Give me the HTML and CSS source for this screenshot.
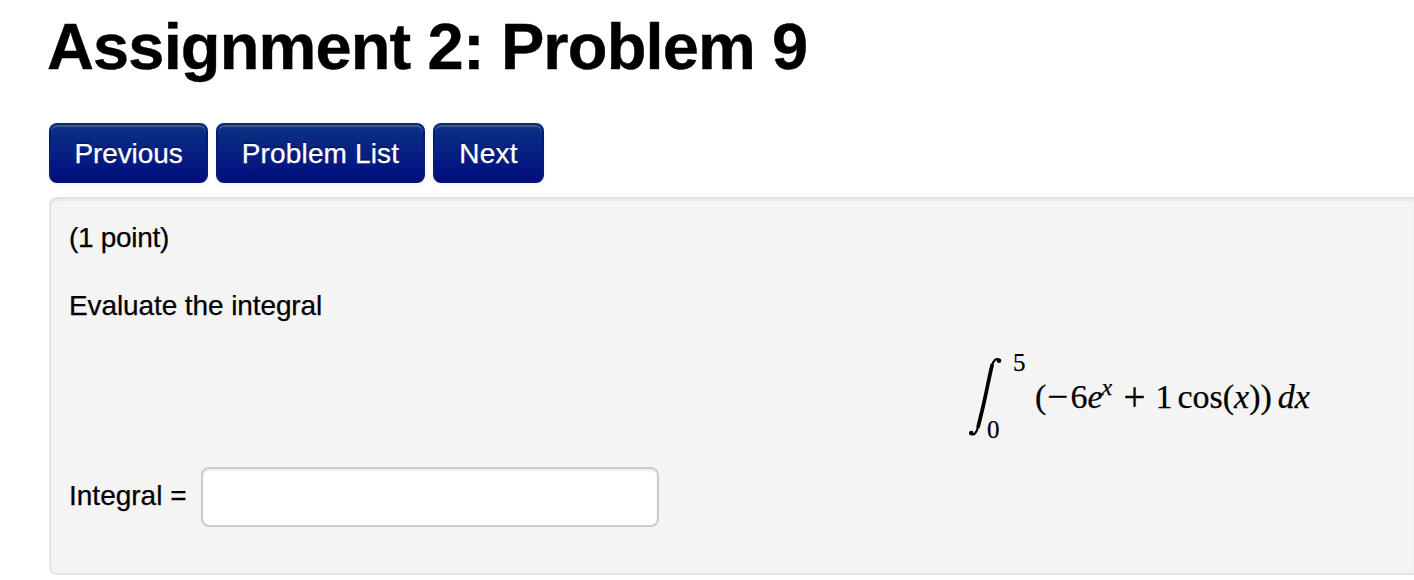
FILE: index.html
```html
<!DOCTYPE html>
<html lang="en">
<head>
<meta charset="utf-8">
<title>Assignment 2: Problem 9</title>
<link rel="stylesheet" href="styles.css">
</head>
<body>
<main class="page">
  <h1 class="title">Assignment 2: Problem 9</h1>
  <nav class="nav">
    <a class="btn btn-prev">Previous</a>
    <a class="btn btn-list">Problem List</a>
    <a class="btn btn-next">Next</a>
  </nav>
  <section class="well">
    <p class="line points">(1 point)</p>
    <p class="line prompt">Evaluate the integral</p>
    <div class="math">
      <svg class="int" width="36" height="88" viewBox="0 0 36 88" role="img" aria-label="integral">
        <g fill="none" stroke="#000" stroke-linecap="round">
          <path stroke-width="2.2" d="M32.500 10C29 7.500 26.500 10 25 16M3.500 84C7.500 85.500 9.500 83 11.200 76.500"/>
          <path stroke-width="3.700" d="M25 15.500C22.500 26 20.800 35 18.200 47S13.600 67 11.200 76.500"/>
        </g>
        <circle cx="32" cy="10.800" r="2.300"/>
        <circle cx="4.300" cy="83" r="2.300"/>
      </svg>
      <span class="limits"><span class="upper">5</span><span class="lower">0</span></span>
      <span class="expr"><span>(</span><span class="minus">−</span><span class="six">6</span><i>e</i><i class="exp">x</i><span class="plus">+</span><span class="one">1</span><span class="cos">cos(</span><i>x</i><span>))</span><i class="dx">dx</i></span>
    </div>
    <label class="answer"><span class="label">Integral =</span><input class="field" type="text"></label>
  </section>
</main>
</body>
</html>
```

FILE: styles.css
```css
* { box-sizing: border-box; }
html { overflow: hidden; }
body {
  margin: 0;
  background: #fff;
  color: #000;
  font: 28px/40px "Liberation Sans", Arial, sans-serif;
  -webkit-text-stroke: 0.25px;
}
.page { padding: 7px 0 0 49px; }
.title {
  margin: 0 0 36px -2px;
  font-size: 65px;
  line-height: 80px;
  font-weight: bold;
  letter-spacing: -0.86px;
  white-space: nowrap;
  -webkit-text-stroke: 0.4px;
}
.nav { display: flex; gap: 8px; }
.btn {
  height: 60px;
  padding-top: 9px;
  border: 2px solid #0a2a72;
  border-color: #0b2b72 #061c78 #05146a;
  border-radius: 8px;
  background: linear-gradient(#0e3383, #000c80) border-box;
  box-shadow: inset 0 2px 0 rgba(255,255,255,.2), 0 2px 4px rgba(0,0,0,.05);
  color: #fff;
  text-align: center;
  text-shadow: 0 -2px 0 rgba(0,0,0,.25);
  white-space: nowrap;
}
.btn-prev { width: 159px; letter-spacing: -0.1px; }
.btn-list { width: 209px; letter-spacing: 0.15px; }
.btn-next { width: 111px; letter-spacing: 0.2px; }
.well {
  height: 378px;
  margin-top: 14px;
  padding: 19px 0 0 18px;
  border: 2px solid #e3e3e3;
  border-right: 0;
  border-radius: 8px 0 0 8px;
  background: #f4f4f4;
  box-shadow: inset 0 2px 2px rgba(0,0,0,.05);
}
.line { margin: 0; }
.points { letter-spacing: -0.3px; }
.prompt { margin-top: 28px; letter-spacing: -0.1px; }
.math {
  display: flex;
  height: 89px;
  margin: 24px 0 0 898px;
  font: 34px/40px "Liberation Serif", "Times New Roman", serif;
}
.limits {
  display: flex;
  flex-direction: column;
  justify-content: space-between;
  width: 32px;
  font-size: 25px;
  line-height: 24px;
}
.upper { margin: 1px 0 0 10px; }
.lower { margin: 0 0 -3px -16px; }
.expr { display: flex; padding-top: 27px; }
.minus { margin-left: 2px; transform: scaleX(1.1); }
.six { margin-left: 3px; }
.exp { font-size: 24px; margin: -10px 0 0 -1px; }
.plus { margin-left: 13px; transform: translateY(2px) scale(1.15); }
.one { margin-left: 11px; }
.cos { margin-left: 5px; }
.dx { margin-left: 6px; }
.answer { display: flex; align-items: center; margin-top: 28px; }
.label { width: 132px; margin-top: -3px; white-space: nowrap; }
.field {
  width: 458px;
  height: 60px;
  padding: 8px 12px;
  border: 2px solid #ccc;
  border-radius: 8px;
  background: #fff;
  box-shadow: inset 0 2px 2px rgba(0,0,0,.075);
  font: inherit;
}
```
